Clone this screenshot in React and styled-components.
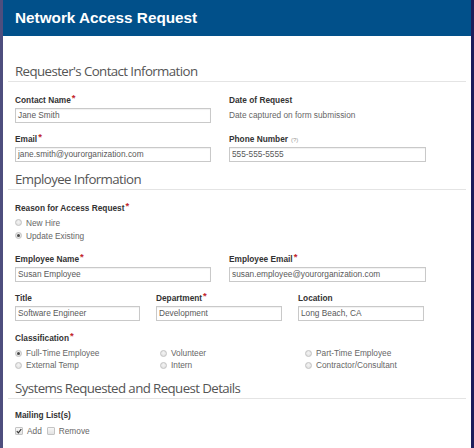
import React from "react";
import styled, { createGlobalStyle } from "styled-components";

const Global = createGlobalStyle`
  html, body { margin: 0; padding: 0; background: #fff; }
  body { width: 474px; height: 448px; overflow: hidden; }
  * { box-sizing: border-box; }
`;

const Frame = styled.div`
  width: 474px;
  height: 448px;
  display: flex;
  flex-direction: column;
  border-left: 3px solid #4e4e7e;
  border-right: 3px solid #1d1d5a;
  background: #fff;
  overflow: hidden;
`;

const Header = styled.header`
  height: 36px;
  flex: none;
  display: flex;
  align-items: center;
  padding: 0 0 1px 12px;
  background: #01508a;
  color: #fff;
  font-family: "Liberation Sans", Arial, sans-serif;
  font-weight: 700;
  font-size: 15.3px;
`;

const Body = styled.main`
  padding: 25px 5px 0;
  display: flex;
  flex-direction: column;
  gap: 7px;
`;

const Section = styled.section`
  display: flex;
  flex-direction: column;
`;

const SectionTitle = styled.h2`
  margin: 0 0 ${(p) => p.$mb ?? 12}px;
  padding-left: 7px;
  height: 21px;
  line-height: 20px;
  border-bottom: 1px solid #e4e4e4;
  font-family: "Open Sans", sans-serif;
  font-weight: 400;
  font-size: 13.3px;
  letter-spacing: -0.6px;
  color: #555;
`;

const Content = styled.div`
  padding-left: 7px;
  display: flex;
  flex-direction: column;
  gap: ${(p) => p.$gap ?? 10}px;
  font-family: "Liberation Sans", Arial, sans-serif;
`;

const Grid = styled.div`
  display: grid;
  grid-template-columns: ${(p) => p.$cols};
  row-gap: 10px;
  margin-top: ${(p) => p.$mt || 0}px;
`;

const Field = styled.div`
  display: flex;
  flex-direction: column;
  gap: 1px;
`;

const Label = styled.div`
  height: 13px;
  line-height: 13px;
  font-size: 8.3px;
  font-weight: 700;
  color: #333;
  white-space: nowrap;
`;

const Req = styled.span`
  color: #c1272d;
  font-size: 9.5px;
  line-height: 0;
  margin-left: 1px;
  vertical-align: 2px;
`;

const Hint = styled.span`
  font-weight: 400;
  font-size: 6px;
  line-height: 0;
  color: #999;
  margin-left: 3px;
`;

const Input = styled.div`
  width: ${(p) => p.$w}px;
  height: 15px;
  line-height: 13px;
  padding: 0 2px;
  border: 1px solid #c9c9c9;
  box-shadow: inset 0 1px 1px rgba(0, 0, 0, 0.06);
  font-size: 8.3px;
  color: #595959;
  white-space: nowrap;
  overflow: hidden;
`;

const Static = styled.div`
  height: 15px;
  line-height: 15px;
  font-size: 8.3px;
  color: #666;
`;

const Options = styled.div`
  display: grid;
  grid-template-columns: ${(p) => p.$cols || "auto"};
  grid-auto-rows: ${(p) => p.$row}px;
  margin-top: ${(p) => p.$mt || 0}px;
`;

const Inline = styled.div`
  display: flex;
  align-items: center;
  gap: 5px;
  height: 13px;
  margin-top: 1px;
`;

const Option = styled.label`
  display: flex;
  align-items: center;
  gap: 4px;
  font-size: 8.3px;
  color: #666;
  white-space: nowrap;
`;

const Radio = styled.span`
  width: 7px;
  height: 7px;
  flex: none;
  border-radius: 50%;
  border: 1px solid #c2c2c2;
  background: radial-gradient(circle at 50% 40%, #f4f4f4, #dcdcdc);
  display: flex;
  align-items: center;
  justify-content: center;
  &::after {
    content: "";
    width: 3px;
    height: 3px;
    border-radius: 50%;
    background: ${(p) => (p.$on ? "#4a4a4a" : "transparent")};
  }
`;

const Box = styled.span`
  width: 8px;
  height: 8px;
  flex: none;
  border: 1px solid #c4c4c4;
  border-radius: 1px;
  background: linear-gradient(#f8f8f8, #e2e2e2);
  display: flex;
  align-items: center;
  justify-content: center;
`;

const Check = () => (
  <svg width="6" height="6" viewBox="0 0 6 6">
    <path d="M0.8 3.2 L2.4 4.8 L5.3 1" fill="none" stroke="#333" strokeWidth="1.2" />
  </svg>
);

const R = ({ on, children }) => (
  <Option>
    <Radio $on={on} />
    {children}
  </Option>
);

export default function App() {
  return (
    <>
      <Global />
      <Frame>
        <Header>Network Access Request</Header>
        <Body>
          <Section>
            <SectionTitle>Requester's Contact Information</SectionTitle>
            <Content>
              <Grid $cols="214px 197px">
                <Field>
                  <Label>
                    Contact Name<Req>*</Req>
                  </Label>
                  <Input $w={196}>Jane Smith</Input>
                </Field>
                <Field>
                  <Label>Date of Request</Label>
                  <Static>Date captured on form submission</Static>
                </Field>
                <Field>
                  <Label>
                    Email<Req>*</Req>
                  </Label>
                  <Input $w={196}>jane.smith@yourorganization.com</Input>
                </Field>
                <Field>
                  <Label>
                    Phone Number<Hint>(?)</Hint>
                  </Label>
                  <Input $w={197}>555-555-5555</Input>
                </Field>
              </Grid>
            </Content>
          </Section>

          <Section>
            <SectionTitle>Employee Information</SectionTitle>
            <Content $gap={11}>
              <Field>
                <Label>
                  Reason for Access Request<Req>*</Req>
                </Label>
                <Options $row={13}>
                  <R>New Hire</R>
                  <R on>Update Existing</R>
                </Options>
              </Field>
              <Grid $cols="214px 197px">
                <Field>
                  <Label>
                    Employee Name<Req>*</Req>
                  </Label>
                  <Input $w={196}>Susan Employee</Input>
                </Field>
                <Field>
                  <Label>
                    Employee Email<Req>*</Req>
                  </Label>
                  <Input $w={197}>susan.employee@yourorganization.com</Input>
                </Field>
              </Grid>
              <Grid $cols="141px 142px 126px" $mt={-1}>
                <Field>
                  <Label>Title</Label>
                  <Input $w={125}>Software Engineer</Input>
                </Field>
                <Field>
                  <Label>
                    Department<Req>*</Req>
                  </Label>
                  <Input $w={126}>Development</Input>
                </Field>
                <Field>
                  <Label>Location</Label>
                  <Input $w={126}>Long Beach, CA</Input>
                </Field>
              </Grid>
              <Field>
                <Label>
                  Classification<Req>*</Req>
                </Label>
                <Options $cols="145px 145px 145px" $row={12} $mt={1}>
                  <R on>Full-Time Employee</R>
                  <R>Volunteer</R>
                  <R>Part-Time Employee</R>
                  <R>External Temp</R>
                  <R>Intern</R>
                  <R>Contractor/Consultant</R>
                </Options>
              </Field>
            </Content>
          </Section>

          <Section>
            <SectionTitle $mb={10}>Systems Requested and Request Details</SectionTitle>
            <Content>
              <Field>
                <Label>Mailing List(s)</Label>
                <Inline>
                  <Option>
                    <Box>
                      <Check />
                    </Box>
                    Add
                  </Option>
                  <Option>
                    <Box />
                    Remove
                  </Option>
                </Inline>
              </Field>
            </Content>
          </Section>
        </Body>
      </Frame>
    </>
  );
}
